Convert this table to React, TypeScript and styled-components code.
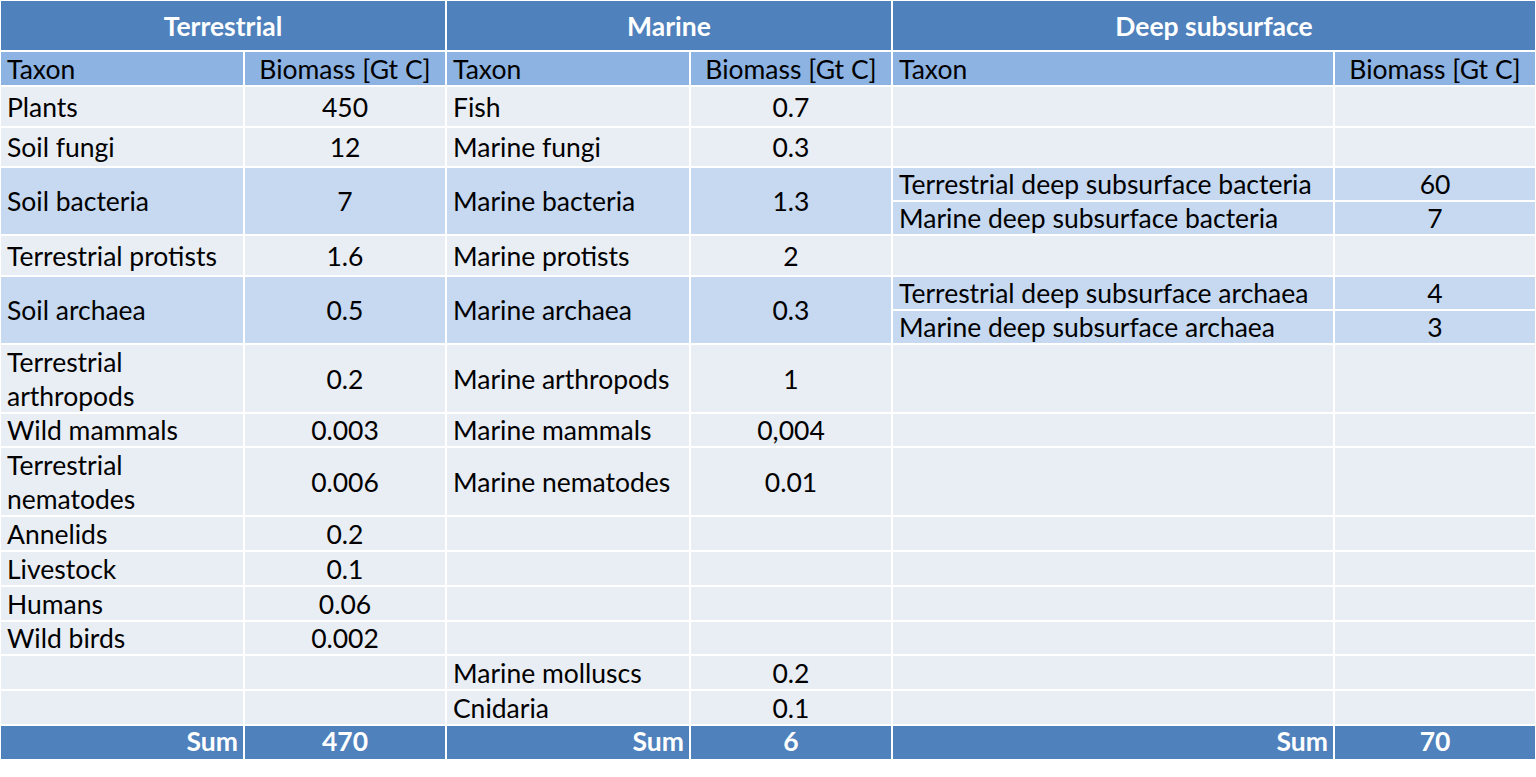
import styled, { createGlobalStyle } from 'styled-components'

type Entry = { taxon: string; value: string }
type Row = { entries: Entry[]; highlight?: boolean }

// body row heights, shared by the three panels
const heights = [39, 38, 66, 39, 66, 67, 32, 67, 33, 33, 33, 32, 33, 33]

const one = (taxon = '', value = ''): Row => ({ entries: [{ taxon, value }] })
const hl = (...entries: Entry[]): Row => ({ entries, highlight: true })

const panels = [
  {
    title: 'Terrestrial',
    taxonWidth: 242,
    sum: '470',
    rows: [
      one('Plants', '450'),
      one('Soil fungi', '12'),
      hl({ taxon: 'Soil bacteria', value: '7' }),
      one('Terrestrial protists', '1.6'),
      hl({ taxon: 'Soil archaea', value: '0.5' }),
      one('Terrestrial\narthropods', '0.2'),
      one('Wild mammals', '0.003'),
      one('Terrestrial\nnematodes', '0.006'),
      one('Annelids', '0.2'),
      one('Livestock', '0.1'),
      one('Humans', '0.06'),
      one('Wild birds', '0.002'),
      one(),
      one(),
    ],
  },
  {
    title: 'Marine',
    taxonWidth: 242,
    sum: '6',
    rows: [
      one('Fish', '0.7'),
      one('Marine fungi', '0.3'),
      hl({ taxon: 'Marine bacteria', value: '1.3' }),
      one('Marine protists', '2'),
      hl({ taxon: 'Marine archaea', value: '0.3' }),
      one('Marine arthropods', '1'),
      one('Marine mammals', '0,004'),
      one('Marine nematodes', '0.01'),
      one(),
      one(),
      one(),
      one(),
      one('Marine molluscs', '0.2'),
      one('Cnidaria', '0.1'),
    ],
  },
  {
    title: 'Deep subsurface',
    taxonWidth: 440,
    sum: '70',
    rows: [
      one(),
      one(),
      hl(
        { taxon: 'Terrestrial deep subsurface bacteria', value: '60' },
        { taxon: 'Marine deep subsurface bacteria', value: '7' }
      ),
      one(),
      hl(
        { taxon: 'Terrestrial deep subsurface archaea', value: '4' },
        { taxon: 'Marine deep subsurface archaea', value: '3' }
      ),
      one(),
      one(),
      one(),
      one(),
      one(),
      one(),
      one(),
      one(),
      one(),
    ],
  },
]

const App = () => {
  return (
    <>
      <GlobalStyle />
      <Table>
        {panels.map((panel) => (
          <Panel key={panel.title}>
            <TitleBar>{panel.title}</TitleBar>
            <Line $taxonWidth={panel.taxonWidth} $height={33}>
              <HeadCell>Taxon</HeadCell>
              <HeadCell $center>Biomass [Gt C]</HeadCell>
            </Line>

            {panel.rows.map((row, i) => (
              <Group key={i} $height={heights[i]}>
                {row.entries.map((entry, j) => (
                  <Line key={j} $taxonWidth={panel.taxonWidth}>
                    <Cell $highlight={row.highlight}>{entry.taxon}</Cell>
                    <Cell $highlight={row.highlight} $center>
                      {entry.value}
                    </Cell>
                  </Line>
                ))}
              </Group>
            ))}

            <Line $taxonWidth={panel.taxonWidth} $height={33}>
              <SumCell $right>Sum</SumCell>
              <SumCell>{panel.sum}</SumCell>
            </Line>
          </Panel>
        ))}
      </Table>
    </>
  )
}

const GlobalStyle = createGlobalStyle`
  body {
    margin: 0;
    background: #ffffff;
    font-family: Lato, 'Liberation Sans', sans-serif;
  }
`

const Table = styled.div`
  display: flex;
  gap: 2px;
  padding: 1px;
  background: #ffffff;
  width: max-content;
`

const Panel = styled.div`
  display: flex;
  flex-direction: column;
  gap: 2px;
`

const TitleBar = styled.div`
  height: 49px;
  display: flex;
  align-items: center;
  justify-content: center;
  background: #4f81bd;
  color: #ffffff;
  font-weight: 700;
  font-size: 26.5px;
`

const Group = styled.div<{ $height: number }>`
  height: ${(p) => p.$height}px;
  display: flex;
  flex-direction: column;
  gap: 2px;
`

const Line = styled.div<{ $taxonWidth: number; $height?: number }>`
  display: grid;
  grid-template-columns: ${(p) => p.$taxonWidth}px 200px;
  grid-template-rows: minmax(0, 1fr);
  gap: 2px;
  flex: 1;
  min-height: 0;
  ${(p) => (p.$height ? `height: ${p.$height}px; flex: none;` : '')}
`

const Cell = styled.div<{ $highlight?: boolean; $center?: boolean }>`
  display: flex;
  align-items: center;
  justify-content: ${(p) => (p.$center ? 'center' : 'flex-start')};
  text-align: ${(p) => (p.$center ? 'center' : 'left')};
  padding: 0 6px;
  background: ${(p) => (p.$highlight ? '#c6d9f1' : '#e9edf4')};
  color: #000000;
  font-size: 26.5px;
  line-height: 34px;
  white-space: pre-line;
`

const HeadCell = styled.div<{ $center?: boolean }>`
  display: flex;
  align-items: center;
  justify-content: ${(p) => (p.$center ? 'center' : 'flex-start')};
  padding: 0 6px;
  background: #8db3e2;
  color: #000000;
  font-size: 26.5px;
  line-height: 34px;
`

const SumCell = styled.div<{ $right?: boolean }>`
  display: flex;
  align-items: center;
  justify-content: ${(p) => (p.$right ? 'flex-end' : 'center')};
  padding: 0 5px 3px;
  background: #4f81bd;
  color: #ffffff;
  font-weight: 700;
  font-size: 26.5px;
  line-height: 30px;
`

export default App
